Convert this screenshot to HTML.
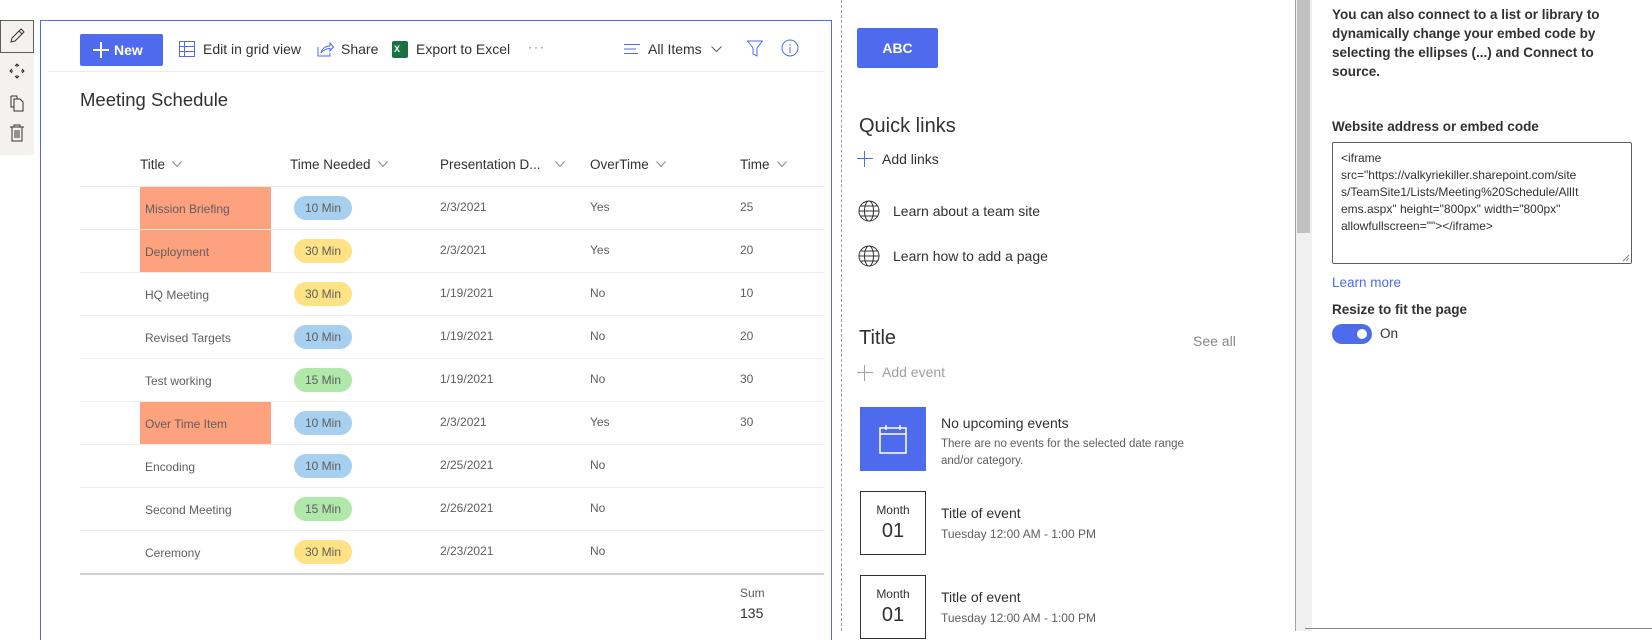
<!DOCTYPE html>
<html><head><meta charset="utf-8"><style>
*{box-sizing:border-box;margin:0;padding:0}
body{width:1652px;height:631px;overflow:hidden;background:#fff;font-family:"Liberation Sans",sans-serif;color:#323130;position:relative}
.a{position:absolute;white-space:nowrap}
.tb{font-size:14px;color:#323130}
.hd{font-size:13.5px;color:#323130}
.cell{font-size:12px;color:#605e5c}
.pill{position:absolute;left:294px;width:58px;height:24px;border-radius:12px;font-size:12px;color:#605e5c;text-align:center;line-height:24px}
.hl{position:absolute;left:140px;width:131px;height:42px;background:#fda17f}
.rl{position:absolute;left:80px;width:744px;height:1px;background:#edebe9}
.chev{display:inline-block;margin-left:7px;vertical-align:2px}
</style></head><body>
<div class="a" style="left:0;top:20px;width:34px;height:135px;background:#f3f2f1"></div>
<div class="a" style="left:0;top:20px;width:34px;height:33px;border:1px solid #605e5c;background:#f3f2f1"></div>
<svg class="a" style="left:8px;top:27px" width="18" height="18" viewBox="0 0 18 18" fill="none" stroke="#323130" stroke-width="1"><path d="M3 15l1-4L13 2l3 3-9 9z M11 4l3 3"/></svg>
<svg class="a" style="left:8px;top:62px" width="18" height="18" viewBox="0 0 18 18" fill="none" stroke="#323130" stroke-width="1"><path d="M9 2v3M9 13v3M2 9h3M13 9h3M7 4l2-2 2 2M7 14l2 2 2-2M4 7L2 9l2 2M14 7l2 2-2 2"/></svg>
<svg class="a" style="left:9px;top:94px" width="16" height="18" viewBox="0 0 16 18" fill="none" stroke="#323130" stroke-width="1"><path d="M2 2h6l0 3M5 5h6l3 3v9H5z M2 2v11h3"/></svg>
<svg class="a" style="left:9px;top:124px" width="16" height="18" viewBox="0 0 16 18" fill="none" stroke="#323130" stroke-width="1"><path d="M1 3h14M5 3V1h6v2M3 3v14h10V3M6 6v8M8 6v8M10 6v8"/></svg>

<div class="a" style="left:40px;top:20px;width:792px;height:620px;border:1px solid #4f6bed;border-bottom:none"></div>
<div class="a" style="left:841px;top:0;width:0;height:631px;border-left:1px dashed #a19f9d"></div>

<div class="a" style="left:80px;top:34px;width:83px;height:32px;background:#4f6bed;border-radius:2px;color:#fff;font-size:14px;font-weight:bold;line-height:32px;padding-left:34px">New</div>
<div class="a" style="left:93px;top:42px;width:16px;height:16px"><div style="position:absolute;left:7px;top:0;width:2px;height:16px;background:#fff"></div><div style="position:absolute;left:0;top:7px;width:16px;height:2px;background:#fff"></div></div>
<svg class="a" style="left:179px;top:41px" width="16" height="16" viewBox="0 0 16 16" fill="none" stroke="#4f6bed"><path d="M.5.5h15v15H.5zM.5 5.5h15M.5 10.5h15M5.5.5v15"/></svg>
<div class="a tb" style="left:203px;top:41px">Edit in grid view</div>
<svg class="a" style="left:317px;top:42px" width="17" height="15" viewBox="0 0 17 15" fill="none" stroke="#4f6bed"><path d="M1 5v9h12v-3M4 11c1-5 5-7 9-7V1l3.5 4L13 9V6.5c-4 0-7 2-9 4.5z"/></svg>
<div class="a tb" style="left:341px;top:41px">Share</div>
<div class="a" style="left:392px;top:41px;width:16px;height:17px;background:#1d6f42;border-radius:2px"></div>
<div class="a" style="left:392px;top:44px;width:10px;height:11px;background:#107c41;color:#fff;font-size:9px;font-weight:bold;text-align:center;line-height:11px">X</div>
<div class="a tb" style="left:416px;top:41px">Export to Excel</div>
<div class="a tb" style="left:528px;top:40px;color:#605e5c;letter-spacing:2px;font-size:12px">···</div>
<svg class="a" style="left:624px;top:43px" width="16" height="12" viewBox="0 0 16 12" stroke="#4f6bed"><path d="M0 1.5h16M0 6h12M0 10.5h14"/></svg>
<div class="a tb" style="left:648px;top:41px">All Items</div>
<svg class="a" style="left:711px;top:46px" width="11" height="7" viewBox="0 0 11 7" fill="none" stroke="#605e5c"><path d="M.5.5l5 5 5-5"/></svg>
<svg class="a" style="left:747px;top:40px" width="16" height="17" viewBox="0 0 16 17" fill="none" stroke="#4f6bed"><path d="M.5 1h15L10 8v8l-4-2V8z"/></svg>
<svg class="a" style="left:781px;top:39px" width="18" height="18" viewBox="0 0 18 18" fill="none" stroke="#4f6bed"><circle cx="9" cy="9" r="8"/><path d="M9 8v6M9 5v1.5"/></svg>
<div class="a" style="left:48px;top:71px;width:776px;height:1px;background:#edebe9"></div>
<div class="a" style="left:80px;top:89px;font-size:18.5px;color:#323130">Meeting Schedule</div>

<div class="a hd" style="left:140px;top:157px">Title<svg class="chev" width="10" height="6" viewBox="0 0 10 6" fill="none" stroke="#8a8886"><path d="M.5.5l4.5 5 4.5-5"/></svg></div>
<div class="a hd" style="left:290px;top:157px">Time Needed<svg class="chev" width="10" height="6" viewBox="0 0 10 6" fill="none" stroke="#8a8886"><path d="M.5.5l4.5 5 4.5-5"/></svg></div>
<div class="a hd" style="left:440px;top:157px">Presentation D...<svg class="chev" style="margin-left:14px" width="10" height="6" viewBox="0 0 10 6" fill="none" stroke="#8a8886"><path d="M.5.5l4.5 5 4.5-5"/></svg></div>
<div class="a hd" style="left:590px;top:157px">OverTime<svg class="chev" width="10" height="6" viewBox="0 0 10 6" fill="none" stroke="#8a8886"><path d="M.5.5l4.5 5 4.5-5"/></svg></div>
<div class="a hd" style="left:740px;top:157px">Time<svg class="chev" width="10" height="6" viewBox="0 0 10 6" fill="none" stroke="#8a8886"><path d="M.5.5l4.5 5 4.5-5"/></svg></div>

<div class="rl" style="top:186px"></div><div class="rl" style="top:229px"></div><div class="rl" style="top:272px"></div><div class="rl" style="top:315px"></div><div class="rl" style="top:358px"></div><div class="rl" style="top:401px"></div><div class="rl" style="top:444px"></div><div class="rl" style="top:487px"></div><div class="rl" style="top:530px"></div>
<div class="a" style="left:80px;top:573px;width:744px;height:2px;background:#d2d0ce"></div>

<div class="hl" style="top:187px"></div><div class="hl" style="top:230px"></div><div class="hl" style="top:402px"></div>

<div class="a cell" style="left:145px;top:202px">Mission Briefing</div>
<div class="a cell" style="left:145px;top:245px">Deployment</div>
<div class="a cell" style="left:145px;top:288px">HQ Meeting</div>
<div class="a cell" style="left:145px;top:331px">Revised Targets</div>
<div class="a cell" style="left:145px;top:374px">Test working</div>
<div class="a cell" style="left:145px;top:417px">Over Time Item</div>
<div class="a cell" style="left:145px;top:460px">Encoding</div>
<div class="a cell" style="left:145px;top:503px">Second Meeting</div>
<div class="a cell" style="left:145px;top:546px">Ceremony</div>

<div class="pill" style="top:196px;background:#a6cff0">10 Min</div>
<div class="pill" style="top:239px;background:#ffe285">30 Min</div>
<div class="pill" style="top:282px;background:#ffe285">30 Min</div>
<div class="pill" style="top:325px;background:#a6cff0">10 Min</div>
<div class="pill" style="top:368px;background:#afe8a8">15 Min</div>
<div class="pill" style="top:411px;background:#a6cff0">10 Min</div>
<div class="pill" style="top:454px;background:#a6cff0">10 Min</div>
<div class="pill" style="top:497px;background:#afe8a8">15 Min</div>
<div class="pill" style="top:540px;background:#ffe285">30 Min</div>

<div class="a cell" style="left:440px;top:200px">2/3/2021</div>
<div class="a cell" style="left:440px;top:243px">2/3/2021</div>
<div class="a cell" style="left:440px;top:286px">1/19/2021</div>
<div class="a cell" style="left:440px;top:329px">1/19/2021</div>
<div class="a cell" style="left:440px;top:372px">1/19/2021</div>
<div class="a cell" style="left:440px;top:415px">2/3/2021</div>
<div class="a cell" style="left:440px;top:458px">2/25/2021</div>
<div class="a cell" style="left:440px;top:501px">2/26/2021</div>
<div class="a cell" style="left:440px;top:544px">2/23/2021</div>

<div class="a cell" style="left:590px;top:200px">Yes</div>
<div class="a cell" style="left:590px;top:243px">Yes</div>
<div class="a cell" style="left:590px;top:286px">No</div>
<div class="a cell" style="left:590px;top:329px">No</div>
<div class="a cell" style="left:590px;top:372px">No</div>
<div class="a cell" style="left:590px;top:415px">Yes</div>
<div class="a cell" style="left:590px;top:458px">No</div>
<div class="a cell" style="left:590px;top:501px">No</div>
<div class="a cell" style="left:590px;top:544px">No</div>

<div class="a cell" style="left:740px;top:200px">25</div>
<div class="a cell" style="left:740px;top:243px">20</div>
<div class="a cell" style="left:740px;top:286px">10</div>
<div class="a cell" style="left:740px;top:329px">20</div>
<div class="a cell" style="left:740px;top:372px">30</div>
<div class="a cell" style="left:740px;top:415px">30</div>

<div class="a cell" style="left:740px;top:586px">Sum</div>
<div class="a" style="left:740px;top:605px;font-size:14px;color:#323130">135</div>

<div class="a" style="left:857px;top:28px;width:81px;height:40px;background:#4f6bed;border-radius:2px;color:#fff;font-weight:bold;font-size:14px;text-align:center;line-height:40px">ABC</div>
<div class="a" style="left:859px;top:115px;font-size:20px;color:#323130">Quick links</div>
<div class="a" style="left:857px;top:151px;width:16px;height:16px"><div style="position:absolute;left:7px;top:0;width:1px;height:16px;background:#4f6bed"></div><div style="position:absolute;left:0;top:7px;width:16px;height:1px;background:#4f6bed"></div></div>
<div class="a tb" style="left:882px;top:151px">Add links</div>
<svg class="a" style="left:858px;top:200px" width="22" height="22" viewBox="0 0 22 22" fill="none" stroke="#323130"><circle cx="11" cy="11" r="10"/><ellipse cx="11" cy="11" rx="4.5" ry="10"/><path d="M1 11h20M3 6h16M3 16h16"/></svg>
<div class="a tb" style="left:893px;top:203px">Learn about a team site</div>
<svg class="a" style="left:858px;top:245px" width="22" height="22" viewBox="0 0 22 22" fill="none" stroke="#323130"><circle cx="11" cy="11" r="10"/><ellipse cx="11" cy="11" rx="4.5" ry="10"/><path d="M1 11h20M3 6h16M3 16h16"/></svg>
<div class="a tb" style="left:893px;top:248px">Learn how to add a page</div>
<div class="a" style="left:859px;top:327px;font-size:20px;color:#323130">Title</div>
<div class="a tb" style="left:1193px;top:333px;color:#8a8886">See all</div>
<div class="a" style="left:857px;top:365px;width:16px;height:16px"><div style="position:absolute;left:7px;top:0;width:1px;height:16px;background:#a19f9d"></div><div style="position:absolute;left:0;top:7px;width:16px;height:1px;background:#a19f9d"></div></div>
<div class="a tb" style="left:882px;top:364px;color:#a19f9d">Add event</div>

<div class="a" style="left:860px;top:407px;width:66px;height:64px;background:#4f6bed"></div>
<svg class="a" style="left:878px;top:424px" width="30" height="30" viewBox="0 0 30 30" fill="none" stroke="#fff" stroke-width="1.5"><path d="M2 4h26v25H2zM2 10h26M8 1v5M22 1v5"/></svg>
<div class="a tb" style="left:941px;top:415px">No upcoming events</div>
<div class="a" style="left:941px;top:436px;font-size:11.5px;color:#605e5c;line-height:16.5px">There are no events for the selected date range<br>and/or category.</div>

<div class="a" style="left:860px;top:491px;width:66px;height:64px;border:1px solid #323130;text-align:center"><div style="font-size:12px;margin-top:11px">Month</div><div style="font-size:20px;margin-top:3px">01</div></div>
<div class="a tb" style="left:941px;top:505px">Title of event</div>
<div class="a" style="left:941px;top:527px;font-size:12px;color:#605e5c">Tuesday 12:00 AM - 1:00 PM</div>
<div class="a" style="left:860px;top:575px;width:66px;height:64px;border:1px solid #323130;text-align:center"><div style="font-size:12px;margin-top:11px">Month</div><div style="font-size:20px;margin-top:3px">01</div></div>
<div class="a tb" style="left:941px;top:589px">Title of event</div>
<div class="a" style="left:941px;top:611px;font-size:12px;color:#605e5c">Tuesday 12:00 AM - 1:00 PM</div>

<div class="a" style="left:1295px;top:0;width:17px;height:631px;background:#f0f0f0;border-left:1px solid #a19f9d"></div>
<div class="a" style="left:1297px;top:0;width:13px;height:233px;background:#c1c1c1"></div>
<div class="a" style="left:1305px;top:628px;width:347px;height:1px;background:#8a8886"></div>

<div class="a" style="left:1332px;top:5px;font-size:13.5px;font-weight:bold;color:#323130;line-height:19px">You can also connect to a list or library to<br>dynamically change your embed code by<br>selecting the ellipses (...) and Connect to<br>source.</div>
<div class="a" style="left:1332px;top:119px;font-size:13.5px;font-weight:bold;color:#323130">Website address or embed code</div>
<div class="a" style="left:1332px;top:142px;width:300px;height:122px;border:1px solid #605e5c;border-radius:2px;padding:7px 8px;font-size:12px;line-height:17px;color:#323130;overflow:hidden">&lt;iframe<br>src="https://valkyriekiller.sharepoint.com/site<br>s/TeamSite1/Lists/Meeting%20Schedule/AllIt<br>ems.aspx" height="800px" width="800px"<br>allowfullscreen=""&gt;&lt;/iframe&gt;</div>
<svg class="a" style="left:1622px;top:254px" width="8" height="8" viewBox="0 0 8 8" stroke="#8a8886"><path d="M1 7l6-6M4 7l3-3"/></svg>
<div class="a" style="left:1332px;top:275px;font-size:13.5px;color:#4f6bed">Learn more</div>
<div class="a" style="left:1332px;top:302px;font-size:13.5px;font-weight:bold;color:#323130">Resize to fit the page</div>
<div class="a" style="left:1332px;top:324px;width:40px;height:20px;border-radius:10px;background:#4f6bed"><div style="position:absolute;right:5px;top:5px;width:10px;height:10px;border-radius:50%;background:#fff"></div></div>
<div class="a" style="left:1380px;top:326px;font-size:13.5px;color:#323130">On</div>
</body></html>
